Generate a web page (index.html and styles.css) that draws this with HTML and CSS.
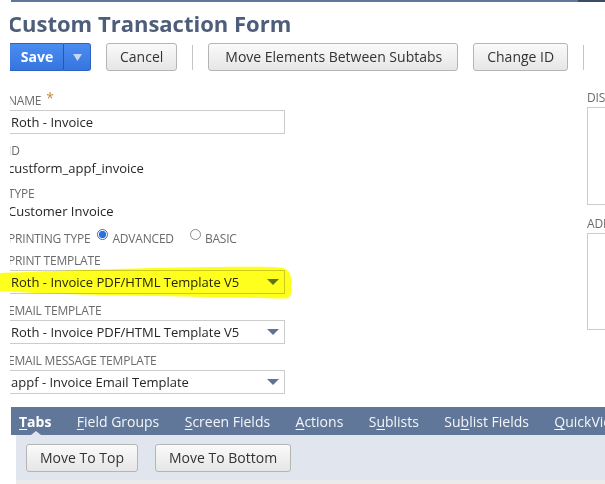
FILE: index.html
```html
<!DOCTYPE html>
<html lang="en">
<head>
<meta charset="utf-8">
<title>Custom Transaction Form</title>
<link rel="stylesheet" href="styles.css">
</head>
<body>
<div class="topbar"><div class="topbar-end"></div></div>
<div class="clip">
  <div class="page">
    <h1 class="title">Custom Transaction Form</h1>

    <div class="toolbar">
      <div class="split">
        <button class="btn-save" type="button">Save</button>
        <button class="btn-save-arrow" type="button" aria-label="More">
          <svg width="9" height="7" viewBox="0 0 9 7"><polygon points="0,0 9,0 4.5,7" fill="#c9d7f1"/></svg>
        </button>
      </div>
      <button class="btn" type="button">Cancel</button>
      <span class="sep"></span>
      <button class="btn wide" type="button">Move Elements Between Subtabs</button>
      <button class="btn" type="button">Change ID</button>
      <span class="sep"></span>
    </div>

    <div class="form">
      <div class="col-left">
        <div class="field first">
          <div class="label">NAME <span class="req">*</span></div>
          <div class="input">Roth - Invoice</div>
        </div>
        <div class="field">
          <div class="label">ID</div>
          <div class="value">custform_appf_invoice</div>
        </div>
        <div class="field">
          <div class="label">TYPE</div>
          <div class="value">Customer Invoice</div>
        </div>
        <div class="field radio-row">
          <span class="label-inline">PRINTING TYPE</span>
          <span class="radio checked"></span><span class="radio-text">ADVANCED</span>
          <span class="radio"></span><span class="radio-text">BASIC</span>
        </div>
        <div class="field tight">
          <div class="label">PRINT TEMPLATE</div>
          <div class="select">
            <span class="select-text">Roth - Invoice PDF/HTML Template V5</span>
            <span class="caret"></span>
          </div>
        </div>
        <div class="field">
          <div class="label">EMAIL TEMPLATE</div>
          <div class="select">
            <span class="select-text">Roth - Invoice PDF/HTML Template V5</span>
            <span class="caret"></span>
          </div>
        </div>
        <div class="field">
          <div class="label">EMAIL MESSAGE TEMPLATE</div>
          <div class="select">
            <span class="select-text">appf - Invoice Email Template</span>
            <span class="caret"></span>
          </div>
        </div>
      </div>

      <div class="col-right">
        <div class="label">DISCLAIMER</div>
        <div class="textarea tall1"></div>
        <div class="label second">ADDRESS</div>
        <div class="textarea tall2"></div>
      </div>
    </div>

    <div class="subtabs">
      <div class="tabbar">
        <span class="tab active"><u>T</u>abs</span>
        <span class="tab"><u>F</u>ield Groups</span>
        <span class="tab"><u>S</u>creen Fields</span>
        <span class="tab"><u>A</u>ctions</span>
        <span class="tab">S<u>u</u>blists</span>
        <span class="tab">Su<u>b</u>list Fields</span>
        <span class="tab"><u>Q</u>uickView</span>
      </div>
      <div class="panel">
        <button class="btn" type="button">Move To Top</button>
        <button class="btn" type="button">Move To Bottom</button>
      </div>
      <div class="panel-foot"></div>
    </div>
  </div>
</div>
<svg class="marker" width="292" height="34" viewBox="0 0 292 34">
  <path d="M0,7 C50,5 130,2 210,1 C250,0.5 275,0.5 283,2 C289,3.5 291,8 291,13 L291,27 C291,31 288,33 283,32.5 C230,31.5 150,30 80,28.5 C40,27.5 15,26 0,25 Z" fill="#ffff1e"/>
</svg>
</body>
</html>
```
FILE: styles.css
```css
html, body {
  margin: 0;
  padding: 0;
  background: #ffffff;
  overflow: hidden;
}
body {
  font-family: "Open Sans", "Noto Sans", "Liberation Sans", sans-serif;
  color: #262626;
  width: 605px;
  height: 484px;
  position: relative;
}

.topbar {
  height: 2px;
  margin-left: 11px;
  background: #607799;
  display: flex;
  justify-content: flex-end;
}
.topbar-end {
  width: 27px;
  background: #3c4c68;
}

.clip {
  margin-left: 10px;
  overflow: hidden;
  height: 482px;
}
.page {
  margin-left: -2px;
  width: 800px;
}

.title {
  margin: 0;
  padding-top: 7px;
  font-size: 22px;
  line-height: 28px;
  font-weight: 700;
  color: #4d5d7a;
}

.toolbar {
  display: flex;
  align-items: center;
  margin-top: 6px;
  height: 28px;
}

.btn {
  height: 28px;
  box-sizing: border-box;
  border: 1px solid #b5b5b5;
  border-radius: 3px;
  background: linear-gradient(#fafafa, #e6e6e6);
  color: #333333;
  font-family: "Open Sans", "Noto Sans", "Liberation Sans", sans-serif;
  font-size: 14px;
  line-height: 26px;
  padding: 0 13px;
  margin: 0 15px 0 0;
  white-space: nowrap;
}
.btn.wide { padding: 0 15px 0 16px; }

.split {
  display: flex;
  height: 28px;
  margin-right: 15px;
}
.btn-save {
  width: 56px;
  height: 28px;
  box-sizing: border-box;
  border: 1px solid #2b63c2;
  border-right: 1px solid #2458b0;
  border-radius: 3px 0 0 3px;
  background: linear-gradient(#4a8cf0, #3675df);
  color: #ffffff;
  font-family: "Open Sans", "Noto Sans", "Liberation Sans", sans-serif;
  font-size: 14px;
  font-weight: 700;
  line-height: 26px;
  padding: 0 0 0 2px;
  margin: 0;
}
.btn-save-arrow {
  width: 27px;
  height: 28px;
  box-sizing: border-box;
  border: 1px solid #2b63c2;
  border-left: 0;
  border-radius: 0 3px 3px 0;
  background: linear-gradient(#4a8cf0, #3675df);
  padding: 0;
  margin: 0;
  display: flex;
  align-items: center;
  justify-content: center;
}

.sep {
  width: 1px;
  height: 25px;
  background: #c6c6c6;
  margin: 0 15px 0 0;
}

.form {
  display: grid;
  grid-template-columns: 277px 200px;
  column-gap: 302px;
  margin-top: 21px;
}

.label {
  font-size: 12px;
  letter-spacing: -0.2px;
  line-height: 16px;
  color: #6b6b6b;
  text-transform: uppercase;
  white-space: nowrap;
}
.req {
  color: #c48a3f;
  font-size: 14px;
  position: relative;
  top: -2px;
  margin-left: 2px;
}

.field { margin-top: 9px; }
.field.first { margin-top: 0; }
.field.tight { margin-top: 6px; }

.input, .select {
  margin-top: 1px;
  height: 24px;
  box-sizing: border-box;
  border: 1px solid #cccccc;
  background: #ffffff;
  font-size: 13px;
  line-height: 22px;
  padding: 0 2px;
  color: #262626;
  white-space: nowrap;
}
.select {
  display: flex;
  align-items: center;
  justify-content: space-between;
  padding-right: 5px;
}
.caret {
  width: 0;
  height: 0;
  border-left: 6px solid transparent;
  border-right: 6px solid transparent;
  border-top: 6px solid #5f7393;
}
.marker {
  position: absolute;
  left: 0;
  top: 266px;
  mix-blend-mode: multiply;
  pointer-events: none;
}

.value {
  font-size: 13px;
  line-height: 18px;
  color: #262626;
  white-space: nowrap;
}

.radio-row {
  display: flex;
  align-items: center;
  margin-top: 9px;
  height: 18px;
  font-size: 12px;
  letter-spacing: -0.2px;
  color: #6b6b6b;
  white-space: nowrap;
}
.label-inline { margin-right: 7px; }
.radio {
  width: 11px;
  height: 11px;
  box-sizing: border-box;
  border-radius: 50%;
  border: 1px solid #8a8a8a;
  background: #ffffff;
  margin-right: 4px;
  margin-bottom: 7px;
}
.radio.checked {
  border: 1px solid #2d6fdc;
  background: radial-gradient(circle, #2d6fdc 0 3.4px, #ffffff 3.9px);
}
.radio-text { margin-right: 16px; }

.col-right { margin-top: -2px; }
.textarea {
  margin-top: 1px;
  border: 1px solid #cccccc;
  box-sizing: border-box;
  width: 200px;
}
.tall1 { height: 98px; }
.tall2 { height: 97px; }
.label.second { margin-top: 11px; }

.subtabs {
  margin-top: 13px;
  margin-left: 3px;
}
.tabbar {
  height: 28px;
  box-sizing: border-box;
  padding: 1px 0 0 8px;
  background: #607799;
  display: flex;
  gap: 25.4px;
  white-space: nowrap;
}
.tab {
  font-size: 14px;
  line-height: 27px;
  color: #f3f5f8;
  position: relative;
}
.tab u { text-underline-offset: 2px; }
.tab.active {
  color: #ffffff;
  font-weight: 700;
}
.tab.active::after {
  content: "";
  position: absolute;
  left: 50%;
  bottom: 0;
  margin-left: -4px;
  border-left: 5px solid transparent;
  border-right: 5px solid transparent;
  border-bottom: 4px solid #e1e6ee;
}
.panel {
  margin-left: 5px;
  height: 45px;
  box-sizing: border-box;
  padding: 9px 0 0 10px;
  background: #e1e6ee;
  display: flex;
  align-items: flex-start;
}
.panel .btn { margin-right: 17px; }
.panel-foot {
  margin-left: 5px;
  height: 10px;
  background: #ebebeb;
}
```
